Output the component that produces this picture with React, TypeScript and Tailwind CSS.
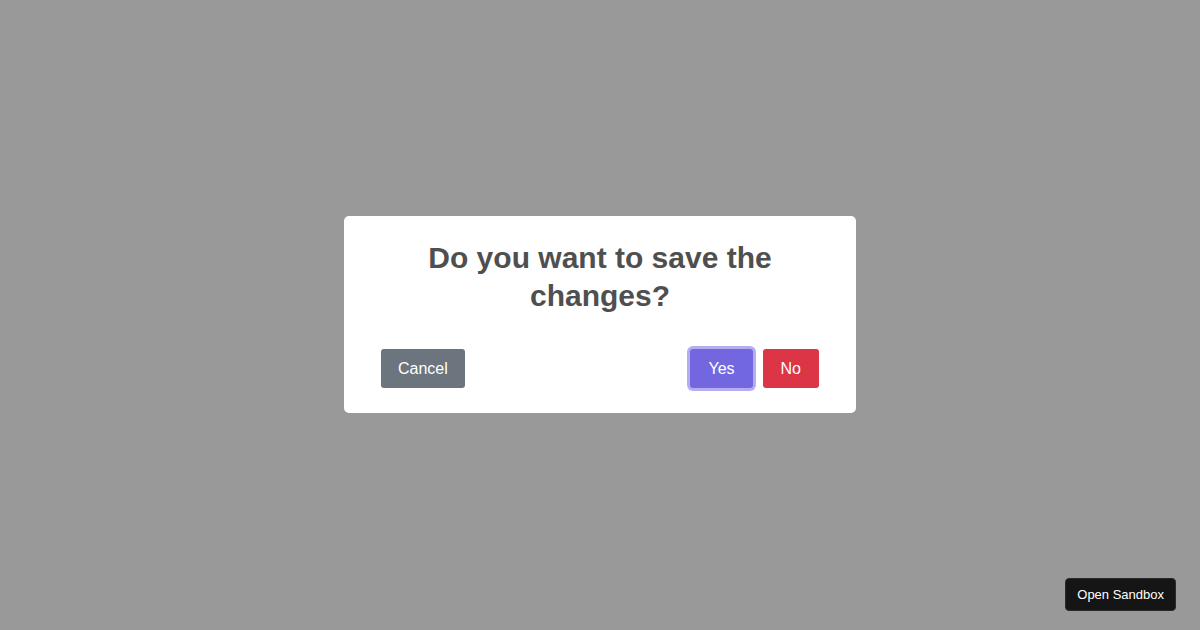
export default function App() {
  return (
    <div className="relative flex h-[630px] w-full items-center justify-center bg-[#999999] font-['Liberation_Sans',Arial,sans-serif]">
      <div className="mb-[1px] w-[512px] rounded-[5px] bg-white px-[37px] pt-[23px] pb-[25px]">
        <h2 className="text-center text-[30px] font-bold leading-[37.5px] text-[#4f4f4f]">
          Do you want to save the
          <br />
          changes?
        </h2>
        <div className="mt-[35px] flex items-center justify-between">
          <button className="h-[39px] rounded-[3px] bg-[#6c757d] px-[17px] text-[16px] text-white">
            Cancel
          </button>
          <div className="flex items-center gap-[10px]">
            <button className="h-[39px] rounded-[3px] bg-[#7367e0] px-[18px] text-[16px] text-white ring-[3px] ring-[#b4aef1]">
              Yes
            </button>
            <button className="h-[39px] rounded-[3px] bg-[#dc3545] px-[18px] text-[16px] text-white">
              No
            </button>
          </div>
        </div>
      </div>
      <button className="absolute right-[24px] bottom-[19px] h-[33px] rounded-[4px] border border-[#2a2a2a] bg-[#151515] px-[11px] text-[13px] text-white">
        Open Sandbox
      </button>
    </div>
  );
}
